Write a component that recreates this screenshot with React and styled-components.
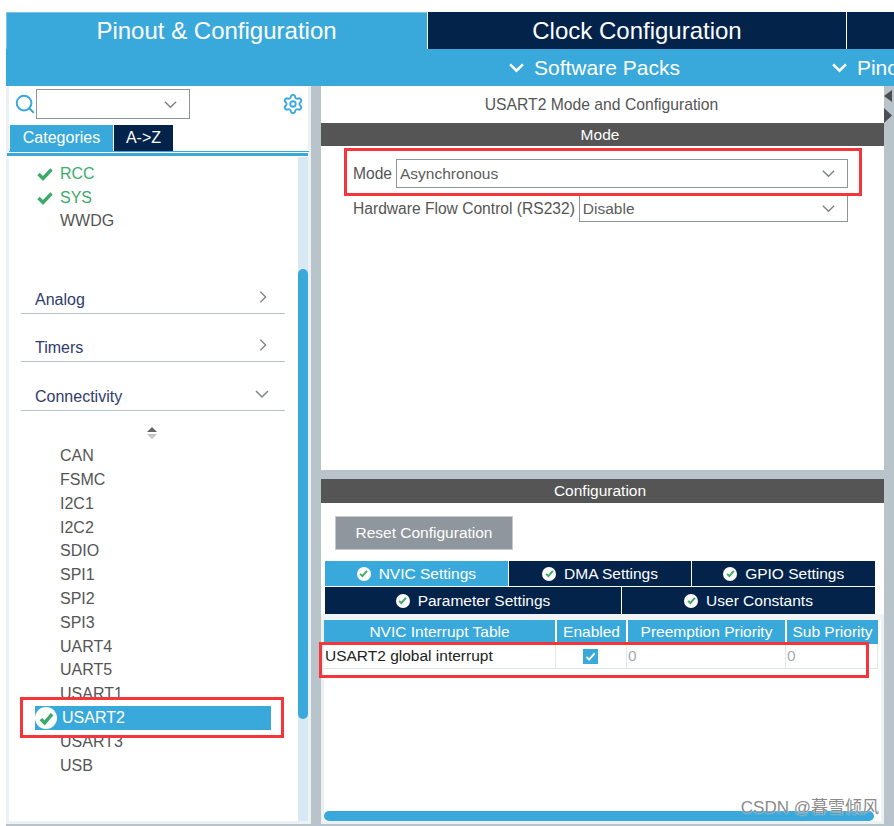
import styled, { createGlobalStyle } from "styled-components";
import { Search, Settings } from "lucide-react";

const GlobalStyle = createGlobalStyle`
  html, body {
    margin: 0;
    padding: 0;
    background: #ffffff;
  }
  * {
    box-sizing: border-box;
  }
`;

const BLUE = "#39a9db";
const NAVY = "#03234b";
const GUTTER = "#b9c4ca";
const SHADE = "#545554";

const Page = styled.div`
  position: relative;
  width: 894px;
  height: 826px;
  padding: 12px 0 0 6px;
  overflow: hidden;
  font-family: "Liberation Sans", Arial, sans-serif;
  color: #555555;
`;

const TopTabs = styled.div`
  display: flex;
  height: 37px;
  gap: 1px;
  background: #ffffff;
`;

const TopTab = styled.div`
  flex: 0 0 ${(p) => p.$width}px;
  display: flex;
  align-items: center;
  justify-content: center;
  font-size: 24px;
  color: #ffffff;
  background: ${(p) => (p.$active ? BLUE : NAVY)};
  box-shadow: ${(p) => (p.$active ? "inset 1px 1px 0 #7cc4e6" : "none")};
`;

const SubBar = styled.div`
  display: flex;
  height: 37px;
  padding-left: 502px;
  align-items: center;
  gap: 151px;
  background: ${BLUE};
  white-space: nowrap;
`;

const SubItem = styled.div`
  display: flex;
  align-items: center;
  gap: 9px;
  font-size: 21px;
  color: #ffffff;
`;

const Body = styled.div`
  display: flex;
  height: 740px;
  background: ${GUTTER};
  padding-bottom: 2px;
`;

const LeftPanel = styled.div`
  flex: 0 0 305px;
  display: flex;
  flex-direction: column;
  background: #ffffff;
  border-left: 3px solid #eef1f4;
  border-right: 3px solid #eef1f4;
  border-bottom: 3px solid #eef1f4;
`;

const SearchRow = styled.div`
  display: flex;
  align-items: center;
  height: 39px;
  padding: 0 4px 3px 5px;
`;

const SearchIcon = styled(Search)`
  flex: none;
  width: 22px;
  color: ${BLUE};
`;

const GearIcon = styled(Settings)`
  flex: none;
  margin-left: auto;
  color: ${BLUE};
`;

const Select = styled.div`
  display: flex;
  flex: ${(p) => (p.$width ? `0 0 ${p.$width}px` : "1")};
  align-items: center;
  justify-content: space-between;
  height: ${(p) => p.$height}px;
  padding: 0 11px 0 3px;
  border: 1px solid #8e9499;
  background: #ffffff;
  font-size: 15.5px;
  color: #5c5c5c;
`;

const ViewTabs = styled.div`
  display: flex;
  height: 27px;
  margin-right: -1px;
  padding-left: 1px;
  gap: 1px;
  border-bottom: 1px solid ${BLUE};
`;

const ViewTab = styled.div`
  flex: 0 0 ${(p) => p.$width}px;
  display: flex;
  align-items: center;
  justify-content: center;
  font-size: 16px;
  height: 26px;
  color: #ffffff;
  background: ${(p) => (p.$active ? BLUE : NAVY)};
`;

const ThickLine = styled.div`
  height: 3px;
  margin: 1px 0 1px -2px;
  background: ${BLUE};
`;

const ListArea = styled.div`
  flex: 1;
  display: flex;
  min-height: 0;
`;

const ListContent = styled.div`
  flex: 0 0 289px;
  padding-top: 5px;
`;

const Track = styled.div`
  position: relative;
  flex: 0 0 10px;
  background: #d8e8f5;
`;

const Thumb = styled.div`
  position: absolute;
  top: 112px;
  left: 0;
  width: 10px;
  height: 450px;
  border-radius: 5px;
  background: ${BLUE};
`;

const Item = styled.div`
  display: flex;
  align-items: center;
  height: 23.8px;
  padding-left: 51px;
  font-size: 16px;
  color: ${(p) => (p.$ok ? "#3cab6a" : "#555555")};
`;

const GreenCheck = styled.svg`
  width: 16px;
  height: 14px;
  margin: 0 7px 0 -23px;
  color: #3cab6a;
`;

const SelectedItem = styled.div`
  display: flex;
  align-items: center;
  height: 24px;
  width: 236px;
  margin-left: 26px;
  background: ${BLUE};
  font-size: 16px;
  color: #ffffff;
`;

const SelectedName = styled.span`
  margin-left: 5px;
`;

const Badge = styled.span`
  flex: none;
  display: inline-flex;
  align-items: center;
  justify-content: center;
  width: ${(p) => p.$size}px;
  height: ${(p) => p.$size}px;
  border-radius: 50%;
  background: #ffffff;
  color: #3cab6a;
`;

const Group = styled.div`
  display: flex;
  align-items: center;
  justify-content: space-between;
  height: 30px;
  margin: ${(p) => p.$top}px 13px 0 12px;
  padding: 2px 15px 0 14px;
  border-bottom: 1px solid #b9c4ca;
  font-size: 16px;
  color: #2f3b6b;
`;

const GroupArrow = styled.span`
  display: flex;
  margin-top: -5px;
`;

const Stepper = styled.div`
  display: flex;
  align-items: center;
  justify-content: center;
  height: 33px;
  padding: 11px 3px 0 0;
`;

const RightColumn = styled.div`
  flex: 0 0 563px;
  margin-left: 10px;
  display: flex;
  flex-direction: column;
  gap: 9px;
`;

const ModePanel = styled.div`
  flex: 0 0 384px;
  background: #ffffff;
`;

const PanelTitle = styled.div`
  display: flex;
  align-items: center;
  justify-content: center;
  height: 37px;
  font-size: 15.7px;
  padding-right: 2px;
`;

const ShadeBar = styled.div`
  display: flex;
  align-items: center;
  justify-content: center;
  height: ${(p) => p.$height}px;
  padding-right: 5px;
  background: ${SHADE};
  color: #ffffff;
  font-size: 15.5px;
`;

const FormRow = styled.div`
  display: flex;
  align-items: center;
  gap: 4px;
  margin: ${(p) => p.$top}px 36px 0 32px;
  font-size: 15.6px;
  white-space: nowrap;
`;

const ConfigPanel = styled.div`
  flex: 1;
  display: flex;
  flex-direction: column;
  background: #ffffff;
  border-bottom: 3px solid #eef1f4;
`;

const ResetButton = styled.div`
  display: flex;
  align-items: center;
  justify-content: center;
  width: 178px;
  height: 34px;
  margin: 13px 0 11px 14px;
  background: #8f969d;
  border: 1px solid #c6cacd;
  color: #ffffff;
  font-size: 15.5px;
`;

const SettingTabs = styled.div`
  display: flex;
  margin: 0 9px 1px 4px;
  gap: 1px;
`;

const SettingTab = styled.div`
  flex: ${(p) => p.$grow || 1} 1 0;
  display: flex;
  align-items: center;
  justify-content: center;
  gap: 8px;
  height: ${(p) => p.$height}px;
  background: ${(p) => (p.$active ? BLUE : NAVY)};
  color: #ffffff;
  font-size: 15.5px;
`;

const TableWrap = styled.div`
  flex: 1;
  display: flex;
  flex-direction: column;
  margin-top: -1px;
  border-top: 6px solid #f1f4f6;
  border-left: 3px solid #eef1f4;
  border-right: 3px solid #eef1f4;
  background: #ffffff;
`;

const TableRow = styled.div`
  display: grid;
  grid-template-columns: ${(p) => p.$columns};
  column-gap: ${(p) => (p.$head ? "2px" : "0")};
  width: 554px;
  height: ${(p) => p.$height}px;
  font-size: 15.5px;
  ${(p) => (p.$head ? "" : "border-bottom: 1px solid #dfe4e8;")}
`;

const HeadCell = styled.div`
  display: flex;
  align-items: center;
  justify-content: center;
  background: ${BLUE};
  color: #ffffff;
  white-space: nowrap;
  overflow: hidden;
`;

const Cell = styled.div`
  display: flex;
  align-items: center;
  justify-content: ${(p) => (p.$center ? "center" : "flex-start")};
  padding-left: ${(p) => (p.$center ? 0 : 1)}px;
  border-right: 1px solid #e4e8eb;
  color: ${(p) => p.$color};
  white-space: nowrap;
`;

const CheckBox = styled.span`
  display: inline-flex;
  align-items: center;
  justify-content: center;
  width: 15px;
  height: 15px;
  margin-right: 2px;
  background: ${BLUE};
  color: #ffffff;
`;

const BottomScroll = styled.div`
  margin: auto 7px 0 0;
  height: 10px;
  border-radius: 5px;
  background: ${BLUE};
`;

const SideStrip = styled.div`
  flex: 1;
  display: flex;
  flex-direction: column;
  gap: 6px;
  padding-top: 4px;
`;

const RedBox = styled.div`
  position: absolute;
  left: ${(p) => p.$x}px;
  top: ${(p) => p.$y}px;
  width: ${(p) => p.$w}px;
  height: ${(p) => p.$h}px;
  border: 3px solid #f4363a;
`;

const Watermark = styled.div`
  position: absolute;
  right: 15px;
  bottom: 8px;
  font-family: "Liberation Sans", "Noto Sans CJK SC", sans-serif;
  font-size: 17px;
  color: #8a8a8a;
  text-shadow: 0 0 2px #ffffff;
  white-space: nowrap;
`;

const Chevron = ({ dir = "down", size = 14, color = "#7d8388", width = 1.5 }) => {
  const d = dir === "down" ? "M2 5l6 6 6-6" : "M5 2l6 6-6 6";
  return (
    <svg width={size} height={size} viewBox="0 0 16 16" fill="none" stroke={color} strokeWidth={width}>
      <path d={d} />
    </svg>
  );
};

const Tick = ({ size = 10, width = 2.6 }) => (
  <svg width={size} height={size} viewBox="0 0 12 12" fill="none" stroke="currentColor" strokeWidth={width}>
    <path d="M1.5 6.5l3 3 6-7" />
  </svg>
);

const TabBadge = () => (
  <Badge $size={14}>
    <Tick size={9} />
  </Badge>
);

const topItems = ["CAN", "FSMC", "I2C1", "I2C2", "SDIO", "SPI1", "SPI2", "SPI3", "UART4", "UART5", "USART1"];

const App = () => {
  return (
    <Page>
      <GlobalStyle />
      <TopTabs>
        <TopTab $active $width={421}>Pinout &amp; Configuration</TopTab>
        <TopTab $width={418}>Clock Configuration</TopTab>
        <TopTab $width={60} />
      </TopTabs>
      <SubBar>
        <SubItem>
          <Chevron size={17} color="#ffffff" width={2.4} />
          Software Packs
        </SubItem>
        <SubItem>
          <Chevron size={17} color="#ffffff" width={2.4} />
          Pinout
        </SubItem>
      </SubBar>

      <Body>
        <LeftPanel>
          <SearchRow>
            <SearchIcon size={22} strokeWidth={2.2} />
            <Select $width={154} $height={30}>
              <span />
              <Chevron size={15} />
            </Select>
            <GearIcon size={22} strokeWidth={2} />
          </SearchRow>
          <ViewTabs>
            <ViewTab $active $width={103}>Categories</ViewTab>
            <ViewTab $width={59}>A-&gt;Z</ViewTab>
          </ViewTabs>
          <ThickLine />
          <ListArea>
            <ListContent>
              <Item $ok>
                <GreenCheck viewBox="0 0 16 14" fill="none" stroke="currentColor" strokeWidth="3.4">
                  <path d="M1.5 7l4.5 4.5 8.5-9" />
                </GreenCheck>
                RCC
              </Item>
              <Item $ok>
                <GreenCheck viewBox="0 0 16 14" fill="none" stroke="currentColor" strokeWidth="3.4">
                  <path d="M1.5 7l4.5 4.5 8.5-9" />
                </GreenCheck>
                SYS
              </Item>
              <Item>WWDG</Item>

              <Group $top={51}>
                Analog
                <GroupArrow>
                  <Chevron dir="right" size={14} />
                </GroupArrow>
              </Group>
              <Group $top={18}>
                Timers
                <GroupArrow>
                  <Chevron dir="right" size={14} />
                </GroupArrow>
              </Group>
              <Group $top={19}>
                Connectivity
                <GroupArrow>
                  <Chevron size={16} />
                </GroupArrow>
              </Group>

              <Stepper>
                <svg width="12" height="14" viewBox="0 0 12 14">
                  <path d="M1 6L6 1l5 5z" fill="#666666" />
                  <path d="M1 8l5 5 5-5z" fill="#c4c4c4" />
                </svg>
              </Stepper>

              {topItems.map((name) => (
                <Item key={name}>{name}</Item>
              ))}
              <SelectedItem>
                <Badge $size={22}>
                  <Tick size={15} width={2.8} />
                </Badge>
                <SelectedName>USART2</SelectedName>
              </SelectedItem>
              <Item>USART3</Item>
              <Item>USB</Item>
            </ListContent>
            <Track>
              <Thumb />
            </Track>
          </ListArea>
        </LeftPanel>

        <RightColumn>
          <ModePanel>
            <PanelTitle>USART2 Mode and Configuration</PanelTitle>
            <ShadeBar $height={23}>Mode</ShadeBar>
            <FormRow $top={13}>
              Mode
              <Select $height={29}>
                Asynchronous
                <Chevron size={15} />
              </Select>
            </FormRow>
            <FormRow $top={7}>
              Hardware Flow Control (RS232)
              <Select $height={27}>
                Disable
                <Chevron size={15} />
              </Select>
            </FormRow>
          </ModePanel>

          <ConfigPanel>
            <ShadeBar $height={24}>Configuration</ShadeBar>
            <ResetButton>Reset Configuration</ResetButton>
            <SettingTabs>
              <SettingTab $active $height={25}>
                <TabBadge />
                NVIC Settings
              </SettingTab>
              <SettingTab $height={25}>
                <TabBadge />
                DMA Settings
              </SettingTab>
              <SettingTab $height={25}>
                <TabBadge />
                GPIO Settings
              </SettingTab>
            </SettingTabs>
            <SettingTabs>
              <SettingTab $grow={296} $height={27}>
                <TabBadge />
                Parameter Settings
              </SettingTab>
              <SettingTab $grow={253} $height={27}>
                <TabBadge />
                User Constants
              </SettingTab>
            </SettingTabs>
            <TableWrap>
              <TableRow $head $height={24} $columns="231px 69px 157px 91px">
                <HeadCell>NVIC Interrupt Table</HeadCell>
                <HeadCell>Enabled</HeadCell>
                <HeadCell>Preemption Priority</HeadCell>
                <HeadCell>Sub Priority</HeadCell>
              </TableRow>
              <TableRow $height={25} $columns="232px 71px 159px 92px">
                <Cell $color="#222222">USART2 global interrupt</Cell>
                <Cell $center>
                  <CheckBox>
                    <Tick size={11} width={2} />
                  </CheckBox>
                </Cell>
                <Cell $color="#a8acaf">0</Cell>
                <Cell $color="#a8acaf">0</Cell>
              </TableRow>
              <BottomScroll />
            </TableWrap>
          </ConfigPanel>
        </RightColumn>

        <SideStrip>
          <svg width="8" height="12" viewBox="0 0 8 12">
            <path d="M8 0v12L0 6z" fill="#4a4f52" />
          </svg>
          <svg width="8" height="15" viewBox="0 0 8 15">
            <path d="M0 0v15l8-7.5z" fill="#4a4f52" />
          </svg>
        </SideStrip>
      </Body>

      <RedBox $x={20} $y={697} $w={264} $h={41} />
      <RedBox $x={344} $y={148} $w={518} $h={48} />
      <RedBox $x={319} $y={642} $w={550} $h={36} />
      <Watermark>CSDN @暮雪倾风</Watermark>
    </Page>
  );
};

export default App;
